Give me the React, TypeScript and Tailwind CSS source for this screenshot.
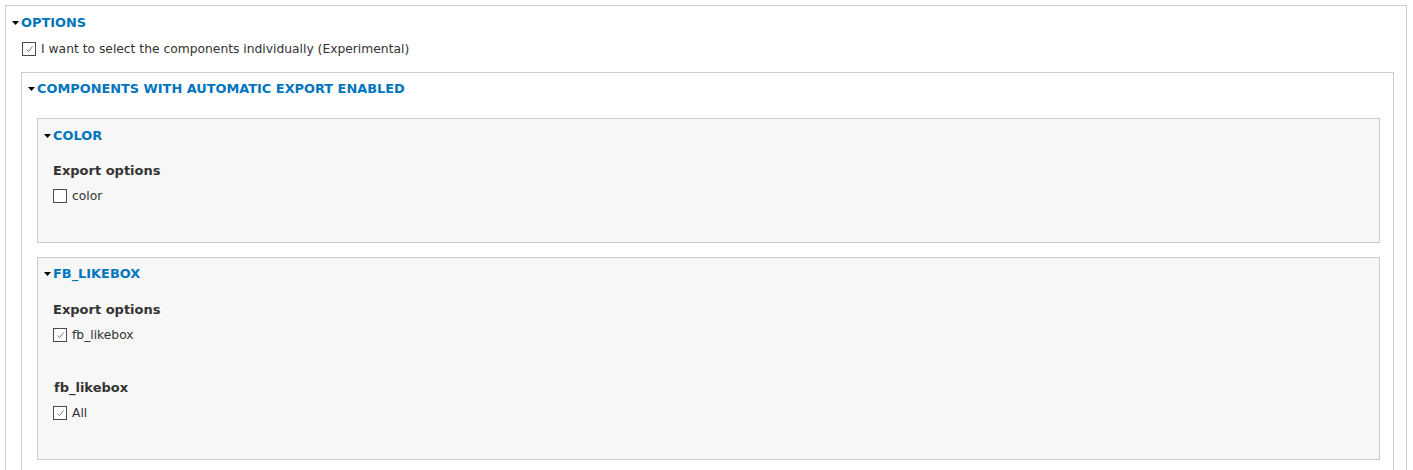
import React from "react";

function Caret() {
  return (
    <svg width="7" height="4" viewBox="0 0 7 4" className="shrink-0">
      <path d="M0 0 L7 0 L3.5 4 Z" fill="#000" />
    </svg>
  );
}

function Legend({ label, className = "" }: { label: string; className?: string }) {
  return (
    <div className={`flex items-center h-4 ${className}`}>
      <span className="ml-[6px]">
        <Caret />
      </span>
      <span className="ml-[2px] text-[12.9px] leading-4 font-bold uppercase text-[#0074bd]">{label}</span>
    </div>
  );
}

function Checkbox({ checked, label, className = "" }: { checked: boolean; label: string; className?: string }) {
  return (
    <label className={`flex items-center h-[14px] ${className}`}>
      <span className="w-[14px] h-[14px] border border-[#4a4a4a] bg-white flex items-center justify-center shrink-0">
        {checked && (
          <svg width="9" height="8" viewBox="0 0 9 8">
            <path d="M1.5 4.5 L3.5 6.5 L7.5 1.5" fill="none" stroke="#777" strokeWidth="1" />
          </svg>
        )}
      </span>
      <span className="ml-[5px] text-[12.3px] leading-[14px] text-[#333]">{label}</span>
    </label>
  );
}

function Heading({ children, className = "" }: { children: React.ReactNode; className?: string }) {
  return <div className={`text-[13px] leading-4 font-bold text-[#333] ${className}`}>{children}</div>;
}

function ComponentBox({ name, children, className = "" }: { name: string; children: React.ReactNode; className?: string }) {
  return (
    <div className={`border border-[#ccc] bg-[#f7f7f7] pb-[39px] ${className}`}>
      <Legend label={name} />
      <div className="pl-[15px]">{children}</div>
    </div>
  );
}

export default function App() {
  return (
    <div className="bg-white w-[1413px] h-[470px] overflow-hidden" style={{ fontFamily: '"DejaVu Sans", Verdana, sans-serif' }}>
      <div className="mt-[5px] ml-[5px] w-[1402px] border border-[#ccc] pt-[9px] pl-[15px] pr-[12px] pb-10">
        <div className="-ml-[15px]">
          <Legend label="Options" />
        </div>
        <Checkbox checked label="I want to select the components individually (Experimental)" className="mt-[11px] ml-[1px]" />

        <div className="mt-[16px] border border-[#ccc] pt-[8px] pl-[15px] pr-[13px] pb-10">
          <div className="-ml-[15px]">
            <Legend label="Components with automatic export enabled" />
          </div>

          <ComponentBox name="color" className="mt-[21px] pt-[9px]">
            <Heading className="mt-[19px]">Export options</Heading>
            <Checkbox checked={false} label="color" className="mt-[10px]" />
          </ComponentBox>

          <ComponentBox name="fb_likebox" className="mt-[14px] pt-[8px]">
            <Heading className="mt-[20px]">Export options</Heading>
            <Checkbox checked label="fb_likebox" className="mt-[10px]" />
            <Heading className="mt-[38px] ml-[1px]">fb_likebox</Heading>
            <Checkbox checked label="All" className="mt-[10px]" />
          </ComponentBox>
        </div>
      </div>
    </div>
  );
}
